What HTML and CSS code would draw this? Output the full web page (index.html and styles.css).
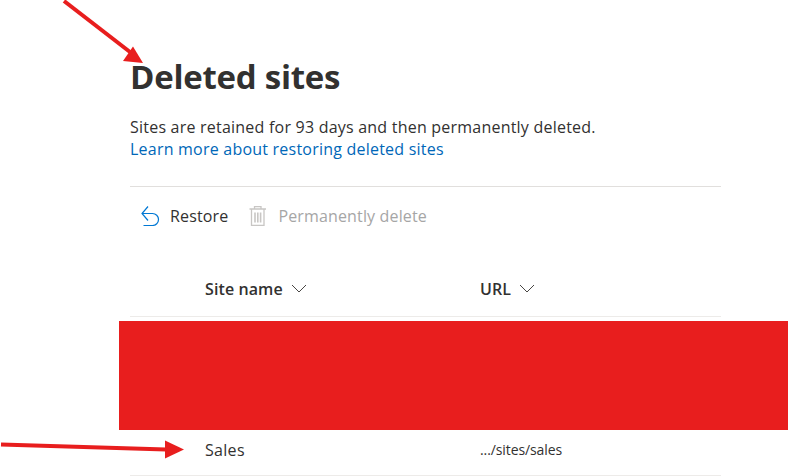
FILE: index.html
```html
<!DOCTYPE html>
<html lang="en">
<head>
<meta charset="utf-8">
<title>Deleted sites</title>
<link rel="stylesheet" href="styles.css">
</head>
<body>
<main class="page">
  <h1 class="title">Deleted sites</h1>
  <p class="desc">Sites are retained for 93 days and then permanently deleted.<br><a class="link" href="#">Learn more about restoring deleted sites</a></p>
  <div class="toolbar">
    <span class="cmd">
      <svg class="cmd-icon" width="20" height="20" viewBox="0 0 20 20" fill="none" stroke="#0078d4" stroke-width="1.2"><path d="M8 0.5 L2 7.5 L8 14.5 M2 7.5 H12.5 A6 6 0 0 1 12.5 19.5 H3.5"/></svg>
      Restore
    </span>
    <span class="cmd cmd-off">
      <svg class="cmd-icon" width="20" height="20" viewBox="0 0 20 20" fill="none" stroke="#c8c6c4" stroke-width="1.3"><path d="M1.5 3 H18 M6.5 3 V0.7 H13 V3 M3.5 3 V19.4 H16 V3"/><path d="M7 6.5 V16.5 M9.8 6.5 V16.5 M12.6 6.5 V16.5" stroke-width="1.6"/></svg>
      Permanently delete
    </span>
  </div>
  <div class="row head">
    <span class="col-name">Site name <svg class="chev" width="16" height="9" viewBox="0 0 16 9" fill="none" stroke="#484644"><path d="M1 1 L8 8 L15 1"/></svg></span>
    <span class="col-url">URL <svg class="chev" width="16" height="9" viewBox="0 0 16 9" fill="none" stroke="#484644"><path d="M1 1 L8 8 L15 1"/></svg></span>
  </div>
  <div class="row item-hidden"></div>
  <div class="row item">
    <span class="col-name">Sales</span>
    <span class="col-url url-text">.../sites/sales</span>
  </div>
</main>
<div class="redact"></div>
<svg class="arrows" width="788" height="476" viewBox="0 0 788 476">
  <path d="M64 1 L130 52" stroke="#e81e1e" stroke-width="4" fill="none"/>
  <path d="M143 63 L123 61 L133 46.5 Z" fill="#e81e1e"/>
  <path d="M1 444.5 L166 449.5" stroke="#e81e1e" stroke-width="4" fill="none"/>
  <path d="M184 449.5 L165 440.5 L165 458.5 Z" fill="#e81e1e"/>
</svg>
</body>
</html>
```
FILE: styles.css
```css
html, body {
  margin: 0;
  padding: 0;
  background: #fff;
  overflow: hidden;
}
body {
  width: 788px;
  height: 476px;
  position: relative;
  font-family: "Open Sans", "Noto Sans", sans-serif;
  color: #323130;
}
.page {
  width: 591px;
  margin-left: 130px;
  padding-top: 55px;
}
.title {
  margin: 0;
  font-size: 33px;
  line-height: 44px;
  font-weight: 700;
  letter-spacing: -0.25px;
}
.desc {
  margin: 17px 0 0;
  font-size: 16px;
  line-height: 22px;
  letter-spacing: 0.22px;
}
.link {
  color: #0067b8;
  text-decoration: none;
}
.toolbar {
  margin-top: 26px;
  border-top: 1px solid #e1dfdd;
  height: 58px;
  display: flex;
  align-items: center;
  gap: 20px;
  padding-left: 10px;
  font-size: 16px;
  letter-spacing: 0.15px;
}
.cmd {
  display: flex;
  align-items: center;
  gap: 10px;
}
.cmd-off {
  color: #a6a6a6;
}
.cmd-icon {
  flex: none;
}
.row {
  display: flex;
  padding-left: 75px;
  box-sizing: border-box;
  border-bottom: 1px solid #edebe9;
}
.head {
  margin-top: 12px;
  height: 60px;
  padding-top: 4px;
  align-items: center;
  font-size: 16px;
  font-weight: 600;
  letter-spacing: 0.1px;
}
.item-hidden {
  height: 0;
  margin-top: 114px;
  border: 0;
}
.item {
  height: 45px;
  padding-bottom: 7px;
  align-items: center;
  font-size: 16px;
  letter-spacing: 0.3px;
}
.col-name {
  width: 275px;
  display: flex;
  align-items: center;
  gap: 8px;
}
.col-url {
  display: flex;
  align-items: center;
  gap: 8px;
}
.url-text {
  font-size: 14px;
  letter-spacing: -0.1px;
}
.redact {
  position: absolute;
  left: 119px;
  top: 321px;
  width: 669px;
  height: 109px;
  background: #e81e1e;
}
.arrows {
  position: absolute;
  left: 0;
  top: 0;
  pointer-events: none;
}
```
